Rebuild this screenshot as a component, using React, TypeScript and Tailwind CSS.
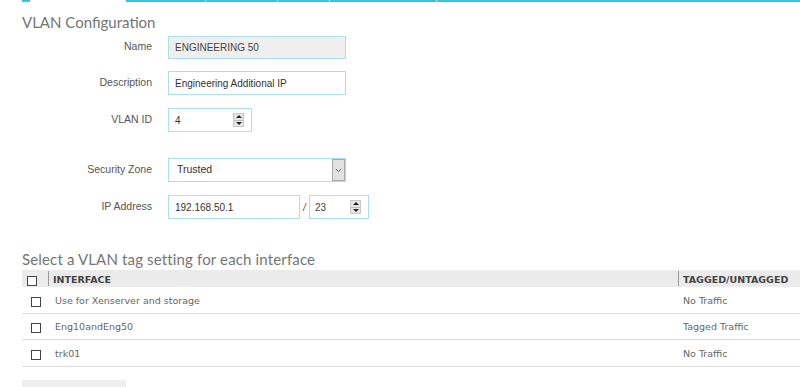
import React from "react";

const labelCls =
  "w-[130px] shrink-0 text-right text-[10.5px] text-[#555] pr-0";

function Spinner() {
  return (
    <div className="flex flex-col w-[11px] h-[14px] border border-[#c8c8c8] bg-[#e6e6e6]">
      <div className="flex-1 flex items-center justify-center border-b border-[#bbb]">
        <div className="w-0 h-0 border-l-[3px] border-r-[3px] border-b-[3px] border-l-transparent border-r-transparent border-b-[#222]" />
      </div>
      <div className="flex-1 flex items-center justify-center">
        <div className="w-0 h-0 border-l-[3px] border-r-[3px] border-t-[3px] border-l-transparent border-r-transparent border-t-[#222]" />
      </div>
    </div>
  );
}

function Checkbox() {
  return <div className="w-[10px] h-[10px] border border-[#444] bg-white shrink-0" />;
}

const rows = [
  { name: "Use for Xenserver and storage", tag: "No Traffic" },
  { name: "Eng10andEng50", tag: "Tagged Traffic" },
  { name: "trk01", tag: "No Traffic" },
];

export default function App() {
  const arial = { fontFamily: '"Liberation Sans", Arial, sans-serif' } as const;
  const heading = { fontFamily: 'Lato, "Open Sans", sans-serif' } as const;
  return (
    <div className="w-[800px] h-[387px] overflow-hidden bg-white relative" style={arial}>
      {/* top tab strip */}
      <div className="flex h-[2px]">
        <div className="w-[22px]" />
        <div className="w-[8px] bg-[#34c6e0]" />
        <div className="w-[96px]" />
        <div className="w-[79px] bg-[#34c6e0]" />
        <div className="w-[1px] bg-[#b9dde4]" />
        <div className="w-[71px] bg-[#34c6e0]" />
        <div className="w-[1px] bg-[#b9dde4]" />
        <div className="w-[51px] bg-[#34c6e0]" />
        <div className="w-[1px] bg-[#b9dde4]" />
        <div className="w-[106px] bg-[#34c6e0]" />
        <div className="w-[1px] bg-[#b9dde4]" />
        <div className="flex-1 bg-[#34c6e0]" />
      </div>

      <div className="pl-[22px]">
        <h1
          className="text-[15px] leading-[18px] text-[#757575] mt-[11px] tracking-[0px]"
          style={heading}
        >
          VLAN Configuration
        </h1>

        <div className="mt-[4px] flex flex-col">
          <div className="flex items-center h-[24px]">
            <div className={labelCls}>Name</div>
            <div className="ml-[16px] w-[178px] h-[23px] border border-[#a9e0ec] bg-[#efefef] flex items-center pl-[6px] text-[10px] text-[#444]">
              ENGINEERING 50
            </div>
          </div>

          <div className="flex items-center h-[24px] mt-[12px]">
            <div className={labelCls}>Description</div>
            <div className="ml-[16px] w-[178px] h-[24px] border border-[#a9e0ec] bg-white flex items-center pl-[6px] text-[10px] text-[#333]">
              Engineering Additional IP
            </div>
          </div>

          <div className="flex items-center h-[24px] mt-[13px]">
            <div className={labelCls}>VLAN ID</div>
            <div className="ml-[16px] w-[84px] h-[24px] border border-[#a9e0ec] bg-white flex items-center justify-between pl-[6px] pr-[7px] text-[10px] text-[#333]">
              <span>4</span>
              <Spinner />
            </div>
          </div>

          <div className="flex items-center h-[24px] mt-[26px]">
            <div className={labelCls}>Security Zone</div>
            <div className="ml-[16px] w-[178px] h-[24px] border border-[#a9e0ec] bg-white flex items-stretch text-[10.5px] text-[#333]">
              <div className="flex-1 flex items-center pl-[8px]">Trusted</div>
              <div className="w-[13px] bg-[#e2e2e2] border border-[#a8a8a8] flex items-center justify-center">
                <svg width="7" height="5" viewBox="0 0 7 5">
                  <path d="M0.8 1 L3.5 3.6 L6.2 1" fill="none" stroke="#666" strokeWidth="1" />
                </svg>
              </div>
            </div>
          </div>

          <div className="flex items-center h-[24px] mt-[13px]">
            <div className={labelCls}>IP Address</div>
            <div className="ml-[16px] w-[132px] h-[24px] border border-[#a9e0ec] bg-white flex items-center pl-[6px] text-[10px] text-[#333]">
              192.168.50.1
            </div>
            <div className="w-[9px] text-center text-[10px] text-[#444] italic">/</div>
            <div className="w-[60px] h-[24px] border border-[#a9e0ec] bg-white flex items-center justify-between pl-[5px] pr-[7px] text-[10px] text-[#444]">
              <span>23</span>
              <Spinner />
            </div>
          </div>
        </div>

        <h2
          className="text-[15px] leading-[18px] text-[#757575] mt-[31px] tracking-[0.15px]"
          style={heading}
        >
          Select a VLAN tag setting for each interface
        </h2>

        <div
          className="mt-[2px] text-[9.5px]"
          style={{ fontFamily: '"DejaVu Sans", Verdana, sans-serif' }}
        >
          <div className="flex items-end h-[17px] bg-[#ebebeb] pb-[1px]">
            <div className="w-[26px] flex items-end pl-[5px]">
              <Checkbox />
            </div>
            <div className="w-[1px] h-[15px] bg-[#999]" />
            <div className="flex-1 pl-[4px] font-bold text-[#444] leading-[12px]">INTERFACE</div>
            <div className="w-[1px] h-[15px] bg-[#999]" />
            <div className="w-[121px] pl-[4px] font-bold text-[#444] leading-[12px]">TAGGED/UNTAGGED</div>
          </div>
          {rows.map((r) => (
            <div key={r.name} className="flex items-center h-[26.5px] border-b-[1.5px] border-[#dcdcdc] text-[#666]">
              <div className="w-[27px] pl-[9px] flex items-center pt-[4px]">
                <Checkbox />
              </div>
              <div className="flex-1 pl-[6px] pt-[2px]">{r.name}</div>
              <div className="w-[122px] pl-[5px] pt-[2px]">{r.tag}</div>
            </div>
          ))}
        </div>

        <div className="mt-[13px] w-[104px] h-[20px] bg-[#eeeeee]" />
      </div>
    </div>
  );
}
